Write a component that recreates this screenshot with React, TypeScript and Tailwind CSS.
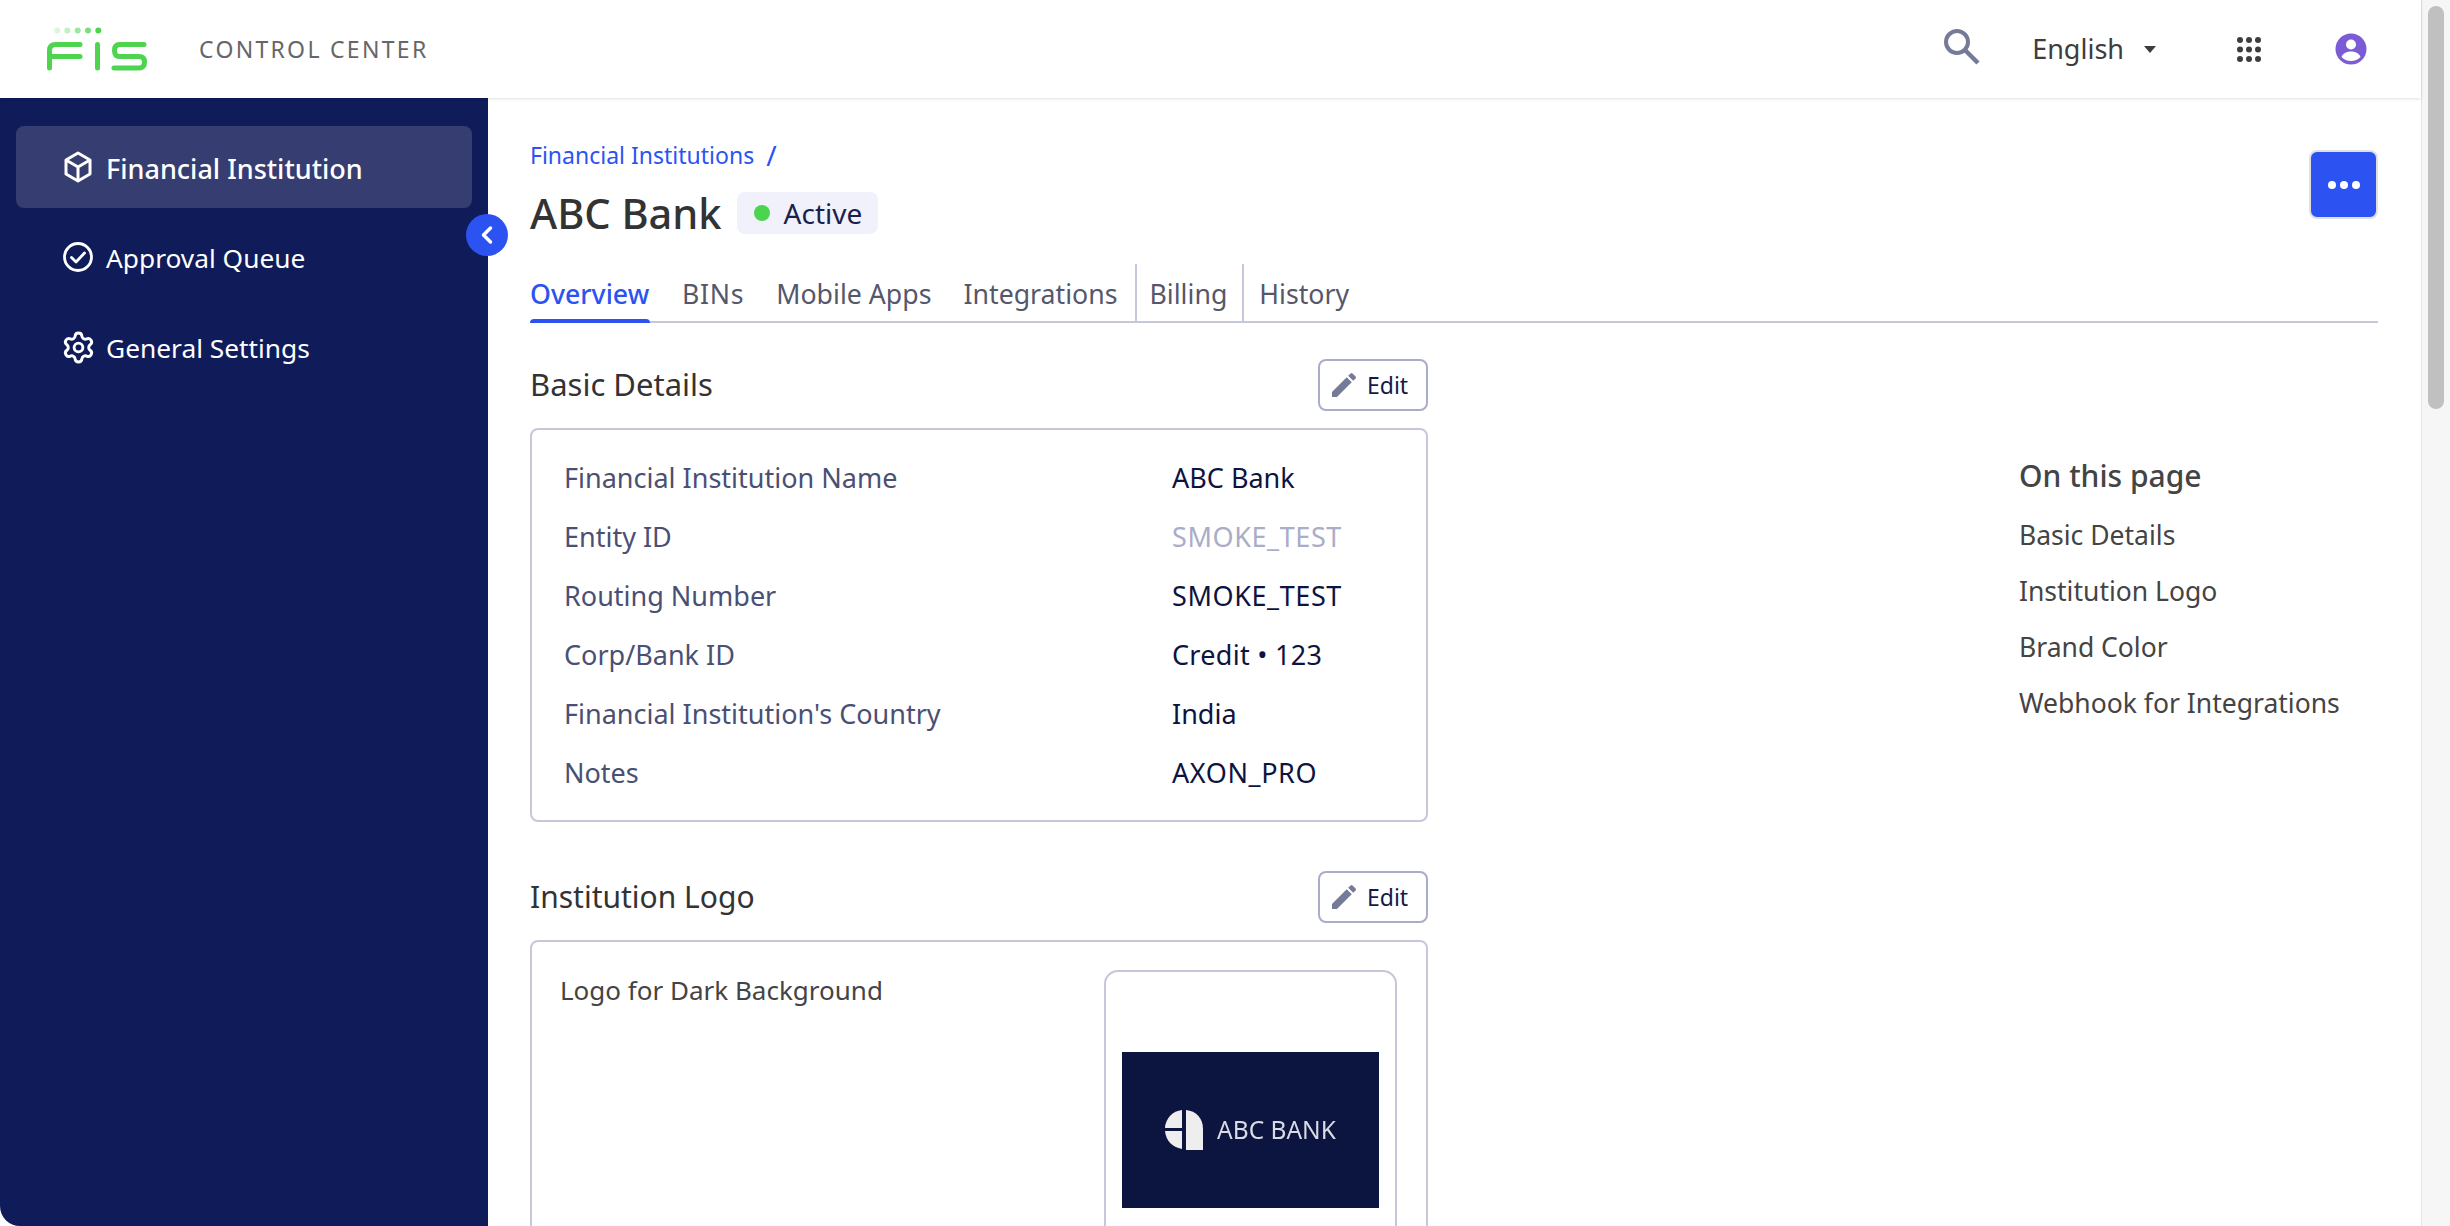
import { Settings } from "lucide-react";

const font = "font-['Noto_Sans','Open_Sans',sans-serif]";

function FisLogo() {
  return (
    <svg width="110" height="50" viewBox="0 0 110 50" className="shrink-0 blur-[0.4px]">
      <g fill="#4fd44f">
        <circle cx="10.300" cy="6.500" r="3" opacity="0.2" />
        <circle cx="20.300" cy="6.500" r="3" opacity="0.35" />
        <circle cx="30.700" cy="6.500" r="3" opacity="0.55" />
        <circle cx="41" cy="6.500" r="3" opacity="0.75" />
        <circle cx="51.300" cy="6.500" r="3" />
      </g>
      <g fill="none" stroke="#4fd44f" strokeWidth="5" strokeLinecap="round" strokeLinejoin="round">
        <path d="M2.500 44V26.500Q2.500 20.500 8.500 20.500H33" />
        <path d="M2.500 32.500H33" />
        <path d="M50.500 20.500V44" />
        <path d="M97 20.500H72.500Q67.500 20.500 67.500 26.500Q67.500 32.500 72.500 32.500H92Q97.500 32.500 97.500 38Q97.500 44 92 44H67" />
      </g>
    </svg>
  );
}

function Pencil() {
  return (
    <svg width="32" height="32" viewBox="0 0 24 24" fill="#757b97" className="shrink-0">
      <path d="M3 17.250V21h3.750L17.810 9.940l-3.750-3.750L3 17.250zM20.710 7.040a1 1 0 0 0 0-1.410l-2.340-2.340a1 1 0 0 0-1.410 0l-1.830 1.830 3.750 3.750 1.830-1.830z" />
    </svg>
  );
}

function EditButton() {
  return (
    <button className="flex h-[52px] w-[110px] items-center gap-[7px] rounded-lg border-2 border-[#a9adc8] bg-white pl-2 text-[23px] text-[#12194b]">
      <Pencil />
      <span>Edit</span>
    </button>
  );
}

function NavItem({ icon, label, active }: { icon: React.ReactNode; label: string; active?: boolean }) {
  return (
    <div
      className={`mx-4 flex h-[82px] items-center gap-[13px] rounded-lg pl-[47px] text-white ${
        active ? "bg-[#363d70] text-[27px] font-medium" : "text-[26.300px]"
      }`}
    >
      {icon}
      <span className="pt-1">{label}</span>
    </div>
  );
}

const rows: [string, string, string][] = [
  ["Financial Institution Name", "ABC Bank", "text-[#0d1440]"],
  ["Entity ID", "SMOKE_TEST", "text-[#a9adc8] tracking-[0.6px]"],
  ["Routing Number", "SMOKE_TEST", "text-[#0d1440] tracking-[0.6px]"],
  ["Corp/Bank ID", "Credit • 123", "text-[#0d1440] tracking-[0.3px]"],
  ["Financial Institution's Country", "India", "text-[#0d1440]"],
  ["Notes", "AXON_PRO", "text-[#0d1440] tracking-[0.6px]"],
];

export default function App() {
  return (
    <div className={`relative flex h-[1226px] w-[2450px] overflow-hidden bg-[#d8d8d8] ${font}`}>
      <div className="flex min-w-0 flex-1 flex-col">
        <header className="z-10 flex h-[98px] shrink-0 items-center bg-white pl-[47px] shadow-[0_1px_3px_rgba(0,0,0,0.12)]">
          <div className="-mt-[1px]"><FisLogo /></div>
          <span className="ml-[42px] text-[23px] tracking-[2.300px] text-[#666]">CONTROL CENTER</span>
          <div className="ml-auto flex items-center">
            <svg width="38" height="38" viewBox="0 0 38 38" fill="none" stroke="#757b97" strokeWidth="4" className="-mt-[5px]">
              <circle cx="15" cy="14" r="11" />
              <path d="M23 22l13 13" strokeWidth="4.500" />
            </svg>
            <span className="ml-[52px] text-[27px] text-[#3d3d3d]">English</span>
            <svg width="12" height="7" viewBox="0 0 12 7" className="ml-5"><path d="M0 0h12L6 7z" fill="#3d3d3d" /></svg>
            <svg width="24" height="25" viewBox="0 0 24 25" fill="#3d3d3d" className="ml-[81px]">
              {[3, 12, 21].flatMap((x) => [3, 12.500, 22].map((y) => <circle key={`${x}-${y}`} cx={x} cy={y} r="3" />))}
            </svg>
            <svg width="32" height="32" viewBox="0 0 32 32" className="ml-[74px] mr-[54px]">
              <circle cx="16" cy="16" r="15.500" fill="#7c5cd6" />
              <circle cx="16" cy="11.500" r="5" fill="#fff" />
              <path d="M6.500 24c1.500-4 5.500-5.500 9.500-5.500s8 1.500 9.500 5.500c-2.500 2.500-5.700 4-9.500 4s-7-1.500-9.500-4z" fill="#fff" />
            </svg>
          </div>
        </header>
        <div className="flex min-h-0 flex-1 bg-white">
          <aside className="relative w-[488px] shrink-0 rounded-bl-[20px] bg-[#101c5a] pt-7">
            <NavItem
              active
              label="Financial Institution"
              icon={
                <svg width="30" height="32" viewBox="0 0 30 32" fill="none" stroke="#fff" strokeWidth="3" strokeLinejoin="round">
                  <path d="M15 2l12 7v14l-12 7-12-7V9z" />
                  <path d="M3 9l12 7 12-7M15 16v14" />
                </svg>
              }
            />
            <div className="h-[8px]" />
            <NavItem
              label="Approval Queue"
              icon={
                <svg width="30" height="30" viewBox="0 0 30 30" fill="none" stroke="#fff" strokeWidth="2.800" strokeLinecap="round" strokeLinejoin="round">
                  <circle cx="15" cy="15" r="13.500" />
                  <path d="M8.500 15.500l4.500 4.500 8.500-9" />
                </svg>
              }
            />
            <div className="h-[8px]" />
            <NavItem
              label="General Settings"
              icon={<Settings size={35} strokeWidth={2} color="#fff" className="-m-[2.500px] shrink-0" />}
            />
            <div className="absolute right-[-20px] top-[116px] flex h-[42px] w-[42px] items-center justify-center rounded-full bg-[#2c53f2]">
              <svg width="14" height="20" viewBox="0 0 14 20" fill="none" stroke="#fff" strokeWidth="3.500" strokeLinecap="round" strokeLinejoin="round"><path d="M10.500 3L3.500 10l7 7" /></svg>
            </div>
          </aside>
          <main className="min-w-0 flex-1 overflow-hidden pl-[42px] pr-[43px] pt-[43px]">
            <div className="flex items-start justify-between">
              <div>
                <div className="flex h-[28px] items-center gap-3 text-[23px] text-[#2c53f2]">
                  <span>Financial Institutions</span>
                  <span className="text-[28px]">/</span>
                </div>
                <div className="mt-[19px] flex h-[50px] items-center">
                  <h1 className="text-[41.500px] font-medium text-[#333]">ABC Bank</h1>
                  <div className="ml-[15px] flex h-[42px] w-[141px] items-center gap-[14px] rounded-lg bg-[#f0f1fa] pl-[17px] text-[28px] text-[#1a1f4b]">
                    <span className="h-4 w-4 rounded-full bg-[#4bd44f]" />
                    <span>Active</span>
                  </div>
                </div>
              </div>
              <button className="mt-[9px] flex h-[69px] w-[69px] items-center justify-center rounded-lg border-2 border-[#dfdfe6] bg-[#2c53f2]">
                <svg width="32" height="8" viewBox="0 0 32 8" fill="#fff">
                  <circle cx="4" cy="4" r="4" /><circle cx="16" cy="4" r="4" /><circle cx="28" cy="4" r="4" />
                </svg>
              </button>
            </div>
            <nav className="mt-[26px] flex h-[59px] items-stretch border-b-2 border-[#c5c7da] text-[26.700px] text-[#55576b]">
              <div className="relative flex w-[120px] items-center pt-[3px] font-medium text-[#2c53f2]">
                Overview
                <span className="absolute inset-x-0 bottom-[-2px] h-1 rounded-t-sm bg-[#2c53f2]" />
              </div>
              <div className="ml-8 flex gap-8">
                <div className="flex items-center pt-[3px] tracking-[0.7px]">BINs</div>
                <div className="flex items-center pt-[3px]">Mobile Apps</div>
                <div className="flex items-center pt-[3px]">Integrations</div>
              </div>
              <div className="ml-[17px] flex items-center border-l-2 border-[#c5c7da] pl-[13px] pr-[15px] pt-[3px]">Billing</div>
              <div className="flex items-center border-l-2 border-[#c5c7da] pl-[15px] pt-[3px]">History</div>
            </nav>
            <div className="flex items-start justify-between">
              <div className="w-[898px]">
                <div className="mt-[36px] flex h-[52px] items-center justify-between">
                  <h2 className="-mt-[2px] text-[31px] text-[#333]">Basic Details</h2>
                  <EditButton />
                </div>
                <div className="mt-[17px] flex h-[394px] flex-col rounded-lg border-2 border-[#c5c7da] pl-[32px] pt-[19px] text-[27px]">
                  {rows.map(([k, v, c]) => (
                    <div key={k} className="flex h-[59px] items-center">
                      <span className="w-[608px] text-[#4a5073]">{k}</span>
                      <span className={c}>{v}</span>
                    </div>
                  ))}
                </div>
                <div className="mt-[49px] flex h-[52px] items-center justify-between">
                  <h2 className="-mt-[2px] text-[30px] text-[#333]">Institution Logo</h2>
                  <EditButton />
                </div>
                <div className="mt-[17px] flex h-[400px] justify-between rounded-lg border-2 border-[#c5c7da] pl-[28px] pr-[29px] pt-[28px]">
                  <span className="mt-[1px] text-[26px] text-[#444]">Logo for Dark Background</span>
                  <div className="h-[360px] w-[293px] rounded-[14px] border-2 border-[#c5c7da] px-4 pt-[80px]">
                    <div className="flex h-[156px] items-center justify-center gap-[14px] bg-[#0c1440]">
                      <svg width="38" height="40" viewBox="0 0 38 40" className="blur-[0.4px]">
                        <path d="M17 0v18H0A19 19 0 0 1 17 0z" fill="#eee" />
                        <path d="M17 21v18C7 37 1 31 0 21z" fill="#eee" />
                        <path d="M21 0c10 1 17 8 17 19v21H21z" fill="#eee" />
                      </svg>
                      <span className="text-[24.500px] text-[#d8dae4] blur-[0.4px]">ABC BANK</span>
                    </div>
                  </div>
                </div>
              </div>
              <aside className="mr-[-5px] mt-[130px] w-[364px] text-[#444]">
                <h3 className="text-[30px] font-medium">On this page</h3>
                <ul className="mt-[10px] text-[26.500px]">
                  {["Basic Details", "Institution Logo", "Brand Color", "Webhook for Integrations"].map((t) => (
                    <li key={t} className="flex h-[56px] items-center">{t}</li>
                  ))}
                </ul>
              </aside>
            </div>
          </main>
        </div>
      </div>
      <div className="flex w-[29px] shrink-0 justify-center border-l border-[#e4e4e4] bg-[#f6f6f6] pt-[6px]">
        <div className="h-[403px] w-4 rounded-full bg-[#c0c0c0]" />
      </div>
    </div>
  );
}
